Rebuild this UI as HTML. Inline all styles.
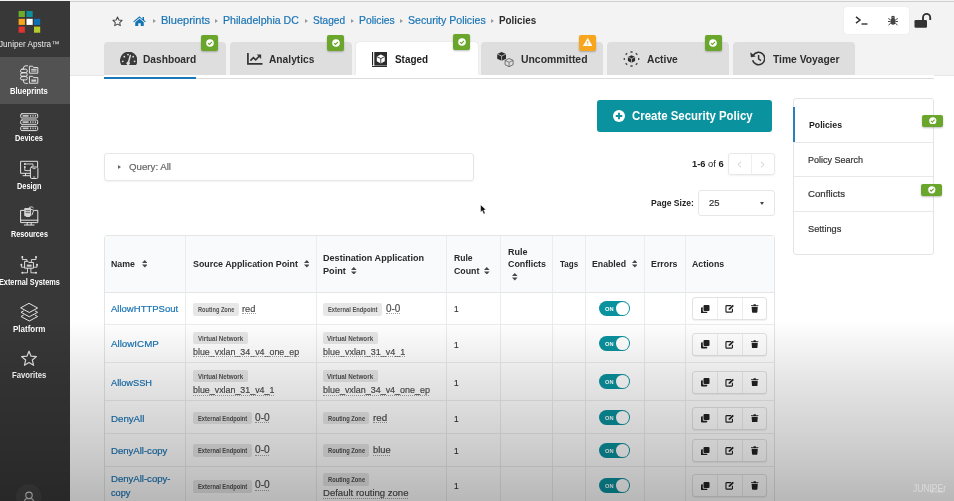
<!DOCTYPE html>
<html lang="en">
<head>
<meta charset="utf-8">
<title>Juniper Apstra - Security Policies</title>
<style>
*{box-sizing:border-box;margin:0;padding:0}
html,body{width:954px;height:501px;overflow:hidden;background:#fff}
body{position:relative;font-family:"Liberation Sans",sans-serif;color:#222;font-size:10px}
.abs{position:absolute}
.t{position:absolute;white-space:nowrap;line-height:1;display:inline-block;transform-origin:0 50%}
.b{font-weight:bold}
/* header */
#hdr{position:absolute;left:70px;top:0;width:884px;height:75px;background:#f3f3f3}
#topline{position:absolute;left:0;top:0;width:954px;height:2px;background:#d4d4d4;z-index:5}
.tab{position:absolute;top:42px;height:33px;width:122px;background:#dedede;border-radius:4px 4px 0 0}
.tab.on{background:#fff}
.tab .lbl{position:absolute;top:11px;font-size:11px;font-weight:bold;color:#2b2b2b;white-space:nowrap;line-height:1}
.badge{position:absolute;top:35px;width:17px;height:16px;border-radius:2px;background:#6aa62c;box-shadow:0 1px 2px rgba(0,0,0,.25)}
.badge.warn{background:#f9a61f}
.bc{position:absolute;top:14px;font-size:11px;color:#1273b4;white-space:nowrap;line-height:1}
.bcsep{position:absolute;top:18.500px;width:0;height:0;border-left:3.500px solid #9a9a9a;border-top:2.500px solid transparent;border-bottom:2.500px solid transparent}
/* sidebar */
#side{position:absolute;left:0;top:0;width:70px;height:501px;background:#383838;overflow:hidden}
#side .act{position:absolute;left:0;top:57px;width:70px;height:47.4px;background:#525252}
#side .lb{position:absolute;left:-11px;width:81px;text-align:center;font-size:8.5px;font-weight:bold;color:#fff;white-space:nowrap;line-height:1}
#side svg{position:absolute}
/* table */
#tbl{position:absolute;left:104px;top:235px;width:671px;height:280px;border:1px solid #e3e5e7;border-radius:3px 3px 0 0;background:#fff}
#thead{position:absolute;left:0;top:0;width:669px;height:57px;background:#f9fafb;border-bottom:1px solid #e3e5e7}
.vl{position:absolute;top:0;width:1px;height:280px;background:#eaeced}
.hl{position:absolute;left:0;width:669px;height:1px;background:#eaeced}
.th{position:absolute;font-size:10px;font-weight:bold;color:#2a2a2a;white-space:nowrap;line-height:13px}
.nm{position:absolute;font-size:10.5px;color:#1273b4;white-space:nowrap;line-height:13px}
.tag{position:absolute;height:12px;border-radius:2px;background:#e6e6e6;font-size:6.5px;font-weight:bold;color:#555;line-height:12px;text-align:center;white-space:nowrap}
.val{position:absolute;font-size:10.5px;color:#555;white-space:nowrap;line-height:1;border-bottom:1px dotted #aaa;padding-bottom:1px}
.cnt{position:absolute;font-size:10.5px;color:#333;line-height:1}
.tog{position:absolute;width:30.700px;height:15px;border-radius:7.500px;background:#0a929e}
.tog i{position:absolute;right:1.100px;top:1.200px;width:12.600px;height:12.600px;border-radius:50%;background:#fff}
.tog span{position:absolute;left:5px;top:4px;font-size:5.5px;font-weight:bold;color:#fff;line-height:1;font-style:normal}
.acts{position:absolute;width:75px;height:23px;border:1px solid #e2e2e2;border-radius:3px;background:#fff;box-shadow:0 1px 1px rgba(0,0,0,.06)}
.acts b{position:absolute;top:0;width:1px;height:21px;background:#ececec}
.acts svg{position:absolute;top:6px}
/* right panel */
#rp{position:absolute;left:793px;top:98px;width:141px;height:157px;border:1px solid #e4e4e4;border-radius:3px;background:#fff}
#rp .d{position:absolute;left:0;width:139px;height:1px;background:#e8e8e8}
#rp .it{position:absolute;left:14px;font-size:10.5px;color:#333;line-height:1;white-space:nowrap}
.gb{position:absolute;width:21px;height:12px;border-radius:2px;background:#6aa62c;box-shadow:0 1px 2px rgba(0,0,0,.25)}
#fade{position:absolute;left:0;top:321px;width:954px;height:180px;background:linear-gradient(to bottom,rgba(0,0,0,0) 0,rgba(0,0,0,.012) 6px,rgba(0,0,0,.045) 24px,rgba(0,0,0,.1) 59px,rgba(0,0,0,.2) 130px,rgba(0,0,0,.28) 180px);z-index:50;pointer-events:none}

.ck{position:absolute;left:5px;top:4px;width:7px;height:7px;border-radius:50%;background:#fff}
.ck:after{content:"";position:absolute;left:1.5px;top:1.8px;width:3.4px;height:1.8px;border-left:1.1px solid #6aa62c;border-bottom:1.1px solid #6aa62c;transform:rotate(-47deg)}

.tagbg{position:absolute;border-radius:2px;background:#e7e7e7}
.dot{position:absolute;height:0;border-bottom:1px dotted #a4a4a4}
.ck2{position:absolute;left:7.500px;top:2.500px;width:7px;height:7px;border-radius:50%;background:#fff}
.ck2:after{content:"";position:absolute;left:1.500px;top:1.800px;width:3.400px;height:1.800px;border-left:1.100px solid #6aa62c;border-bottom:1.100px solid #6aa62c;transform:rotate(-47deg)}

#wrap{position:absolute;left:0;top:0;width:954px;height:501px;overflow:hidden;will-change:transform}

</style>
</head>
<body>
<div id="wrap">
<div id="hdr"></div>

<!-- breadcrumb -->
<svg class="abs" style="left:111.5px;top:16px" width="11" height="10.5" viewBox="0 0 24 23"><path d="M12 2.200l3 6.400 6.900.9-5.100 4.800 1.300 6.900-6.100-3.400-6.100 3.400 1.300-6.900L2.100 9.500l6.900-.9z" fill="none" stroke="#444" stroke-width="2.200" stroke-linejoin="round"/></svg>
<svg class="abs" style="left:132.5px;top:15.5px" width="13" height="10" viewBox="0 0 26 20"><path d="M13 0.500L0.500 10.800l1.500 1.800L13 3.600l11 9 1.500-1.800-3.500-2.900V2h-3v4.400z" fill="#1273b4"/><path d="M13 5.600l-8.500 7V20h6v-5.500h5V20h6v-7.400z" fill="#1273b4"/></svg>
<i class="bcsep" style="left:152.5px"></i>
<span class="t" id="t0" style="left:161.00px;top:16.29px;font-size:10.3px;transform:scaleX(1.0699);color:#1b75b5;-webkit-text-stroke:.2px #1b75b5">Blueprints</span>
<i class="bcsep" style="left:215px"></i>
<span class="t" id="t1" style="left:223.30px;top:16.29px;font-size:10.3px;transform:scaleX(1.0278);color:#1b75b5;-webkit-text-stroke:.2px #1b75b5">Philadelphia DC</span>
<i class="bcsep" style="left:304.5px"></i>
<span class="t" id="t2" style="left:313.00px;top:16.29px;font-size:10.3px;transform:scaleX(0.9804);color:#1b75b5;-webkit-text-stroke:.2px #1b75b5">Staged</span>
<i class="bcsep" style="left:350.5px"></i>
<span class="t" id="t3" style="left:359.00px;top:16.29px;font-size:10.3px;transform:scaleX(1.0061);color:#1b75b5;-webkit-text-stroke:.2px #1b75b5">Policies</span>
<i class="bcsep" style="left:400px"></i>
<span class="t" id="t4" style="left:408.00px;top:16.29px;font-size:10.3px;transform:scaleX(1.0285);color:#1b75b5;-webkit-text-stroke:.2px #1b75b5">Security Policies</span>
<i class="bcsep" style="left:491px"></i>
<span class="t" id="t5" style="left:499.00px;top:16.29px;font-size:10.3px;transform:scaleX(0.9583);color:#2b2b2b;font-weight:bold">Policies</span>

<div class="abs" style="left:70px;top:75px;width:34px;height:1px;background:#e6e6e6"></div><div class="abs" style="left:934px;top:75px;width:20px;height:1px;background:#e6e6e6"></div>
<!-- tool box -->
<div class="abs" style="left:844px;top:7px;width:65px;height:27px;background:#fff;border-radius:3px;box-shadow:0 0 1px rgba(0,0,0,.12)"></div>
<svg class="abs" style="left:854.5px;top:15.5px" width="13" height="9" viewBox="0 0 13 9"><path d="M1 0.800L5 4 1 7.200" fill="none" stroke="#333" stroke-width="1.500"/><path d="M6.500 8h6" stroke="#333" stroke-width="1.400"/></svg>
<svg class="abs" style="left:888px;top:15px" width="10" height="10.5" viewBox="0 0 20 21"><ellipse cx="10" cy="12.500" rx="5" ry="7" fill="#444"/><path d="M6 5.500a4 4 0 0 1 8 0z" fill="#444"/><path d="M0.500 7l4.500 2.500M19.500 7L15 9.500M0 13h5M20 13h-5M1 20l4.500-3.500M19 20l-4.500-3.500" stroke="#444" stroke-width="2" fill="none"/></svg>
<svg class="abs" style="left:914px;top:12.5px" width="18" height="15" viewBox="0 0 18 15"><rect x="0.500" y="7" width="12.500" height="7.800" rx="1.200" fill="#333"/><path d="M9 7V4.500a3.600 3.600 0 0 1 7.200 0V7" fill="none" stroke="#333" stroke-width="1.900"/></svg>

<!-- tabs -->
<div class="tab" style="left:104px"></div>
<div class="tab" style="left:230px"></div>
<div class="tab on" style="left:356px;box-shadow:0 0 2px rgba(0,0,0,.12)"></div>
<div class="tab" style="left:481px"></div>
<div class="tab" style="left:607px"></div>
<div class="tab" style="left:733px"></div>
<span class="t" id="t6" style="left:143.30px;top:53.86px;font-size:10.5px;transform:scaleX(0.9700);color:#2e2e2e;font-weight:bold">Dashboard</span>
<span class="t" id="t7" style="left:269.00px;top:53.86px;font-size:10.5px;transform:scaleX(0.9724);color:#2e2e2e;font-weight:bold">Analytics</span>
<span class="t" id="t8" style="left:395.00px;top:53.86px;font-size:10.5px;transform:scaleX(0.9424);color:#1c1c1c;font-weight:bold">Staged</span>
<span class="t" id="t9" style="left:520.90px;top:53.86px;font-size:10.5px;transform:scaleX(0.9912);color:#2e2e2e;font-weight:bold">Uncommitted</span>
<span class="t" id="t10" style="left:646.70px;top:53.86px;font-size:10.5px;transform:scaleX(0.9773);color:#2e2e2e;font-weight:bold">Active</span>
<span class="t" id="t11" style="left:772.50px;top:53.86px;font-size:10.5px;transform:scaleX(0.9808);color:#2e2e2e;font-weight:bold">Time Voyager</span>
<div class="abs" style="left:104px;top:75px;width:830px;height:3px;background:#fff"></div>
<div class="abs" style="left:104px;top:77.5px;width:830px;height:1px;background:#dcdcdc"></div>
<div class="abs" style="left:104px;top:77px;width:92px;height:2px;background:#1a78b8"></div>
<svg class="abs" style="left:120px;top:52px" width="17.400" height="13.200" viewBox="0 0 17.400 13.200"><path d="M1.500 13.200A8.700 8.700 0 1 1 15.900 13.200Q15.600 13.200 15.300 13.200H2.100Z" fill="#3a3a3a"/><path d="M1.200 13.200h15" stroke="#3a3a3a" stroke-width="0"/><path d="M8 12.300L10.300 3.600" stroke="#dedede" stroke-width="1.500" stroke-linecap="round"/><circle cx="8.200" cy="11.300" r="1.700" fill="#dedede"/><g fill="#dedede"><circle cx="2.800" cy="9.300" r=".9"/><circle cx="4.300" cy="4.700" r=".9"/><circle cx="8" cy="2.600" r=".9"/><circle cx="13.200" cy="4.700" r=".9"/><circle cx="14.600" cy="9.300" r=".9"/></g></svg>
<svg class="abs" style="left:247px;top:53px" width="15.500" height="11.800" viewBox="0 0 15.500 11.800"><path d="M.9 0v10.900h14.600" fill="none" stroke="#333" stroke-width="1.700"/><path d="M3.400 7.600l3-3 2.300 2.200 4-4" fill="none" stroke="#333" stroke-width="1.600"/><path d="M9.800 1.600h4.300v4.300z" fill="#333"/></svg>
<svg class="abs" style="left:372px;top:51.500px" width="15.200" height="15.200" viewBox="0 0 15.200 15.200"><rect x="0" y="0" width="1.100" height="13.400" fill="#222"/><rect x="2.300" y="0" width="12.900" height="13.600" fill="#2b2b2b"/><rect x="0" y="14" width="15.200" height="1.200" fill="#2b2b2b"/><path d="M8.800 2.600l4 2v4.700l-4 2.200-4-2.200V4.600z" fill="#fff"/><path d="M4.800 4.600l4 2 4-2M8.800 6.600v4.900" fill="none" stroke="#2b2b2b" stroke-width=".9"/></svg>
<svg class="abs" style="left:497px;top:51.500px" width="16.500" height="15" viewBox="0 0 16.500 15"><path d="M4.600 0l4.400 2v4.700l-4.400 2.100-4.400-2.100V2z" fill="#2b2b2b"/><path d="M.2 2l4.400 2 4.400-2M4.600 4v4.800" fill="none" stroke="#dedede" stroke-width=".7"/><path d="M12.100 6.500l4 1.900v4.300l-4 2-4-2V8.400z" fill="#dedede" stroke="#555" stroke-width=".8" stroke-linejoin="round"/><path d="M8.100 8.400l4 1.900 4-1.900M12.100 10.300v4.400" fill="none" stroke="#555" stroke-width=".7"/></svg>
<svg class="abs" style="left:622.500px;top:51px" width="17" height="16" viewBox="0 0 17 16"><path d="M15.70 6.90L15.70 9.10M14.37 12.17L12.81 13.73M9.60 15.00L7.40 15.00M4.19 13.73L2.63 12.17M1.30 9.10L1.30 6.90M2.63 3.83L4.19 2.27M7.40 1.00L9.60 1.00M12.81 2.27L14.37 3.83" stroke="#444" stroke-width="1.300" fill="none"/><path d="M8.500 4.300l3.600 1.700v4l-3.600 1.800-3.600-1.800V6z" fill="#2b2b2b"/><path d="M4.900 6l3.600 1.700 3.600-1.700M8.500 7.700v4" fill="none" stroke="#dedede" stroke-width=".7"/></svg>
<svg class="abs" style="left:750.200px;top:51.400px" width="15.200" height="14.600" viewBox="0 0 15.200 14.600"><path d="M3.300 4.200A6.200 6.200 0 1 1 2.600 9.300" fill="none" stroke="#333" stroke-width="1.600"/><path d="M.3 1.300l.6 5 4.800-.9z" fill="#333"/><path d="M8.600 4v3.800l2.400 1.800" fill="none" stroke="#333" stroke-width="1.500"/></svg>
<!-- tab badges -->
<div class="badge" style="left:201px"><svg class="abs" style="left:4.500px;top:4px" width="8" height="8" viewBox="0 0 16 16"><circle cx="8" cy="8" r="7.600" fill="#fff"/><path d="M4.200 8.300l2.700 2.700 5-5.300" fill="none" stroke="#6aa62c" stroke-width="2.300"/></svg></div>
<div class="badge" style="left:327px"><svg class="abs" style="left:4.500px;top:4px" width="8" height="8" viewBox="0 0 16 16"><circle cx="8" cy="8" r="7.600" fill="#fff"/><path d="M4.200 8.300l2.700 2.700 5-5.300" fill="none" stroke="#6aa62c" stroke-width="2.300"/></svg></div>
<div class="badge" style="left:453px;top:34px"><svg class="abs" style="left:4.500px;top:4px" width="8" height="8" viewBox="0 0 16 16"><circle cx="8" cy="8" r="7.600" fill="#fff"/><path d="M4.200 8.300l2.700 2.700 5-5.300" fill="none" stroke="#6aa62c" stroke-width="2.300"/></svg></div>
<div class="badge warn" style="left:578.5px"></div>
<svg class="abs" style="left:582.500px;top:37.500px" width="9.500" height="8.500" viewBox="0 0 19 17"><path d="M9.500 1L18.300 16H.7z" fill="#fff" stroke="#fff" stroke-width="1.400" stroke-linejoin="round"/><path d="M9.500 6v5.500" stroke="#f9a61f" stroke-width="2"/><circle cx="9.500" cy="13.600" r="1.100" fill="#f9a61f"/></svg>
<div class="badge" style="left:704.5px"><svg class="abs" style="left:4.500px;top:4px" width="8" height="8" viewBox="0 0 16 16"><circle cx="8" cy="8" r="7.600" fill="#fff"/><path d="M4.200 8.300l2.700 2.700 5-5.300" fill="none" stroke="#6aa62c" stroke-width="2.300"/></svg></div>

<div class="abs" style="left:596.5px;top:100px;width:175px;height:31.5px;background:#0a929e;border-radius:3px"></div>
<svg class="abs" style="left:613.300px;top:110px" width="12" height="12" viewBox="0 0 12 12"><circle cx="6" cy="6" r="6" fill="#fff"/><path d="M6 2.800v6.400M2.800 6h6.400" stroke="#0a929e" stroke-width="1.900"/></svg>
<span class="t" id="t12" style="left:631.80px;top:110.40px;font-size:12.0px;transform:scaleX(0.9516);color:#fff;font-weight:bold">Create Security Policy</span>
<div class="abs" style="left:104px;top:152.500px;width:369.500px;height:28px;border:1px solid #e6e6e6;border-radius:3px;background:#fff;box-shadow:0 1px 2px rgba(0,0,0,.05)"></div>
<i class="abs" style="left:117.500px;top:164.500px;width:0;height:0;border-left:3.500px solid #666;border-top:2.500px solid transparent;border-bottom:2.500px solid transparent"></i>
<span class="t" id="t13" style="left:129.00px;top:162.37px;font-size:9.4px;transform:scaleX(1.0334);color:#666;-webkit-text-stroke:.2px #666">Query: All</span>
<span class="t" id="t14" style="left:691.70px;top:158.77px;font-size:9.4px;transform:scaleX(0.9965);color:#222"><b>1-6</b> of <b>6</b></span>
<div class="abs" style="left:728px;top:152.500px;width:46.500px;height:22.500px;border:1px solid #e8e8e8;border-radius:3px;background:#fff;box-shadow:0 1px 2px rgba(0,0,0,.06)"></div>
<div class="abs" style="left:751px;top:153.500px;width:1px;height:20.500px;background:#f0f0f0"></div>
<svg class="abs" style="left:737px;top:160.500px" width="5" height="7" viewBox="0 0 5 7"><path d="M4 .7L1 3.500 4 6.300" fill="none" stroke="#ccc" stroke-width="1"/></svg>
<svg class="abs" style="left:760px;top:160.500px" width="5" height="7" viewBox="0 0 5 7"><path d="M1 .7L4 3.500 1 6.300" fill="none" stroke="#ccc" stroke-width="1"/></svg>
<span class="t" id="t15" style="left:651.00px;top:197.97px;font-size:9.4px;transform:scaleX(0.9125);color:#222;font-weight:bold">Page Size:</span>
<div class="abs" style="left:698px;top:190px;width:76.500px;height:25.500px;border:1px solid #e6e6e6;border-radius:3px;background:#fff"></div>
<span class="t" id="t16" style="left:708.70px;top:197.97px;font-size:9.4px;transform:scaleX(1.0060);color:#333;-webkit-text-stroke:.2px #333">25</span>
<i class="abs" style="left:759.500px;top:201.500px;width:0;height:0;border-top:3px solid #444;border-left:2.500px solid transparent;border-right:2.500px solid transparent"></i>
<div id="rp"><div class="d" style="top:42.500px"></div><div class="d" style="top:77px"></div><div class="d" style="top:111.500px"></div><div class="abs" style="left:-1px;top:8px;width:2px;height:35px;background:#2a80bd"></div></div>
<span class="t" id="t17" style="left:809.00px;top:119.87px;font-size:9.4px;transform:scaleX(0.9312);color:#1c1c1c;font-weight:bold">Policies</span>
<span class="t" id="t18" style="left:808.00px;top:154.67px;font-size:9.4px;transform:scaleX(0.9594);color:#333;-webkit-text-stroke:.2px #333">Policy Search</span>
<span class="t" id="t19" style="left:808.00px;top:189.27px;font-size:9.4px;transform:scaleX(1.0291);color:#333;-webkit-text-stroke:.2px #333">Conflicts</span>
<span class="t" id="t20" style="left:808.00px;top:224.17px;font-size:9.4px;transform:scaleX(0.9830);color:#333;-webkit-text-stroke:.2px #333">Settings</span>
<div class="gb" style="left:922px;top:114.500px"><svg class="abs" style="left:7px;top:2.200px" width="7.600" height="7.600" viewBox="0 0 16 16"><circle cx="8" cy="8" r="7.600" fill="#fff"/><path d="M4.200 8.300l2.700 2.700 5-5.300" fill="none" stroke="#6aa62c" stroke-width="2.300"/></svg></div>
<div class="gb" style="left:921px;top:184px"><svg class="abs" style="left:7px;top:2.200px" width="7.600" height="7.600" viewBox="0 0 16 16"><circle cx="8" cy="8" r="7.600" fill="#fff"/><path d="M4.200 8.300l2.700 2.700 5-5.300" fill="none" stroke="#6aa62c" stroke-width="2.300"/></svg></div>
<div id="tbl"><div id="thead"></div>
<div class="vl" style="left:80px"></div>
<div class="vl" style="left:211px"></div>
<div class="vl" style="left:341px"></div>
<div class="vl" style="left:395px"></div>
<div class="vl" style="left:447px"></div>
<div class="vl" style="left:480px"></div>
<div class="vl" style="left:539px"></div>
<div class="vl" style="left:580px"></div>
<div class="hl" style="top:88px"></div>
<div class="hl" style="top:126px"></div>
<div class="hl" style="top:164px"></div>
<div class="hl" style="top:197px"></div>
<div class="hl" style="top:230px"></div>
</div>
<span class="t" id="t21" style="left:111.40px;top:260.29px;font-size:9.2px;transform:scaleX(0.9548);color:#2a2a2a;font-weight:bold">Name</span>
<svg class="abs" style="left:141.7px;top:260.2px" width="5.600" height="7.600" viewBox="0 0 5.600 7.600"><path d="M2.800 0L5.600 3.100H0zM2.800 7.600L5.600 4.500H0z" fill="#484848"/></svg>
<span class="t" id="t22" style="left:192.60px;top:260.29px;font-size:9.2px;transform:scaleX(0.9632);color:#2a2a2a;font-weight:bold">Source Application Point</span>
<svg class="abs" style="left:303.8px;top:260.2px" width="5.600" height="7.600" viewBox="0 0 5.600 7.600"><path d="M2.800 0L5.600 3.100H0zM2.800 7.600L5.600 4.500H0z" fill="#484848"/></svg>
<span class="t" id="t23" style="left:323.00px;top:253.99px;font-size:9.2px;transform:scaleX(0.9876);color:#2a2a2a;font-weight:bold">Destination Application</span>
<span class="t" id="t24" style="left:323.00px;top:267.09px;font-size:9.2px;transform:scaleX(0.9927);color:#2a2a2a;font-weight:bold">Point</span>
<svg class="abs" style="left:351.0px;top:266.7px" width="5.600" height="7.600" viewBox="0 0 5.600 7.600"><path d="M2.800 0L5.600 3.100H0zM2.800 7.600L5.600 4.500H0z" fill="#484848"/></svg>
<span class="t" id="t25" style="left:453.70px;top:253.99px;font-size:9.2px;transform:scaleX(0.9336);color:#2a2a2a;font-weight:bold">Rule</span>
<span class="t" id="t26" style="left:453.70px;top:267.09px;font-size:9.2px;transform:scaleX(0.9574);color:#2a2a2a;font-weight:bold">Count</span>
<svg class="abs" style="left:484.3px;top:266.7px" width="5.600" height="7.600" viewBox="0 0 5.600 7.600"><path d="M2.800 0L5.600 3.100H0zM2.800 7.600L5.600 4.500H0z" fill="#484848"/></svg>
<span class="t" id="t27" style="left:507.50px;top:247.69px;font-size:9.2px;transform:scaleX(0.9788);color:#2a2a2a;font-weight:bold">Rule</span>
<span class="t" id="t28" style="left:507.50px;top:260.29px;font-size:9.2px;transform:scaleX(0.9666);color:#2a2a2a;font-weight:bold">Conflicts</span>
<svg class="abs" style="left:512.3px;top:273.2px" width="5.600" height="7.600" viewBox="0 0 5.600 7.600"><path d="M2.800 0L5.600 3.100H0zM2.800 7.600L5.600 4.500H0z" fill="#484848"/></svg>
<span class="t" id="t29" style="left:560.00px;top:260.29px;font-size:9.2px;transform:scaleX(0.8764);color:#2a2a2a;font-weight:bold">Tags</span>
<span class="t" id="t30" style="left:592.30px;top:260.29px;font-size:9.2px;transform:scaleX(0.9510);color:#2a2a2a;font-weight:bold">Enabled</span>
<svg class="abs" style="left:631.6px;top:260.2px" width="5.600" height="7.600" viewBox="0 0 5.600 7.600"><path d="M2.800 0L5.600 3.100H0zM2.800 7.600L5.600 4.500H0z" fill="#484848"/></svg>
<span class="t" id="t31" style="left:651.40px;top:260.29px;font-size:9.2px;transform:scaleX(0.9609);color:#2a2a2a;font-weight:bold">Errors</span>
<span class="t" id="t32" style="left:692.20px;top:260.29px;font-size:9.2px;transform:scaleX(0.9554);color:#2a2a2a;font-weight:bold">Actions</span>
<span class="t" id="t33" style="left:111.30px;top:304.27px;font-size:9.4px;transform:scaleX(1.0155);color:#1b75b5;-webkit-text-stroke:.2px #1b75b5">AllowHTTPSout</span>
<span class="t" id="t34" style="left:111.30px;top:339.47px;font-size:9.4px;transform:scaleX(1.0427);color:#1b75b5;-webkit-text-stroke:.2px #1b75b5">AllowICMP</span>
<span class="t" id="t35" style="left:111.30px;top:377.97px;font-size:9.4px;transform:scaleX(0.9835);color:#1b75b5;-webkit-text-stroke:.2px #1b75b5">AllowSSH</span>
<span class="t" id="t36" style="left:110.90px;top:413.67px;font-size:9.4px;transform:scaleX(1.0337);color:#1b75b5;-webkit-text-stroke:.2px #1b75b5">DenyAll</span>
<span class="t" id="t37" style="left:110.90px;top:446.17px;font-size:9.4px;transform:scaleX(1.0193);color:#1b75b5;-webkit-text-stroke:.2px #1b75b5">DenyAll-copy</span>
<span class="t" id="t38" style="left:110.90px;top:474.17px;font-size:9.4px;transform:scaleX(1.0195);color:#1b75b5;-webkit-text-stroke:.2px #1b75b5">DenyAll-copy-</span>
<span class="t" id="t39" style="left:110.80px;top:487.87px;font-size:9.4px;transform:scaleX(0.9792);color:#1b75b5;-webkit-text-stroke:.2px #1b75b5">copy</span>
<!--ROWS-BEGIN-->
<div class="tagbg" style="left:193.3px;top:303.10px;width:45.7px;height:12.5px"></div><span class="t" id="t40" style="left:197.90px;top:307.14px;font-size:6.4px;transform:scaleX(0.8838);color:#505050;font-weight:bold">Routing Zone</span>
<span class="t" id="t41" style="left:242.40px;top:303.60px;font-size:9.8px;transform:scaleX(0.9455);color:#4c4c4c;-webkit-text-stroke:.2px #4c4c4c">red</span><div class="dot" style="left:242.4px;top:313.20px;width:13.4px"></div>
<div class="tagbg" style="left:193px;top:331.75px;width:54.5px;height:12.5px"></div><span class="t" id="t42" style="left:197.60px;top:335.79px;font-size:6.4px;transform:scaleX(0.9665);color:#505050;font-weight:bold">Virtual Network</span>
<span class="t" id="t43" style="left:192.90px;top:346.60px;font-size:9.8px;transform:scaleX(0.9059);color:#4c4c4c;-webkit-text-stroke:.2px #4c4c4c">blue_vxlan_34_v4_one_ep</span><div class="dot" style="left:192.9px;top:356.20px;width:106.1px"></div>
<div class="tagbg" style="left:193px;top:369.85px;width:54.5px;height:12.5px"></div><span class="t" id="t44" style="left:197.60px;top:373.89px;font-size:6.4px;transform:scaleX(0.9665);color:#505050;font-weight:bold">Virtual Network</span>
<span class="t" id="t45" style="left:192.90px;top:385.00px;font-size:9.8px;transform:scaleX(0.9055);color:#4c4c4c;-webkit-text-stroke:.2px #4c4c4c">blue_vxlan_31_v4_1</span><div class="dot" style="left:192.9px;top:394.60px;width:81.4px"></div>
<div class="tagbg" style="left:193.2px;top:411.95px;width:58.6px;height:12.5px"></div><span class="t" id="t46" style="left:197.80px;top:415.99px;font-size:6.4px;transform:scaleX(0.9015);color:#505050;font-weight:bold">External Endpoint</span>
<span class="t" id="t47" style="left:254.80px;top:411.50px;font-size:10.6px;transform:scaleX(0.9600);color:#4c4c4c;-webkit-text-stroke:.2px #4c4c4c">0-0</span><div class="dot" style="left:254.8px;top:422.10px;width:14.7px"></div>
<div class="tagbg" style="left:193.2px;top:444.35px;width:58.6px;height:12.5px"></div><span class="t" id="t48" style="left:197.80px;top:448.39px;font-size:6.4px;transform:scaleX(0.9015);color:#505050;font-weight:bold">External Endpoint</span>
<span class="t" id="t49" style="left:254.80px;top:443.90px;font-size:10.6px;transform:scaleX(0.9600);color:#4c4c4c;-webkit-text-stroke:.2px #4c4c4c">0-0</span><div class="dot" style="left:254.8px;top:454.50px;width:14.7px"></div>
<div class="tagbg" style="left:193.2px;top:480.15px;width:58.6px;height:12.5px"></div><span class="t" id="t50" style="left:197.80px;top:484.19px;font-size:6.4px;transform:scaleX(0.9015);color:#505050;font-weight:bold">External Endpoint</span>
<span class="t" id="t51" style="left:254.80px;top:479.40px;font-size:10.6px;transform:scaleX(0.9600);color:#4c4c4c;-webkit-text-stroke:.2px #4c4c4c">0-0</span><div class="dot" style="left:254.8px;top:490.00px;width:14.7px"></div>
<div class="tagbg" style="left:323px;top:303.10px;width:58.8px;height:12.5px"></div><span class="t" id="t52" style="left:327.60px;top:307.14px;font-size:6.4px;transform:scaleX(0.9051);color:#505050;font-weight:bold">External Endpoint</span>
<span class="t" id="t53" style="left:385.50px;top:302.60px;font-size:10.6px;transform:scaleX(0.9339);color:#4c4c4c;-webkit-text-stroke:.2px #4c4c4c">0-0</span><div class="dot" style="left:385.5px;top:313.20px;width:14.3px"></div>
<div class="tagbg" style="left:322.6px;top:331.75px;width:55.5px;height:12.5px"></div><span class="t" id="t54" style="left:327.20px;top:335.79px;font-size:6.4px;transform:scaleX(0.9879);color:#505050;font-weight:bold">Virtual Network</span>
<span class="t" id="t55" style="left:322.60px;top:346.60px;font-size:9.8px;transform:scaleX(0.9144);color:#4c4c4c;-webkit-text-stroke:.2px #4c4c4c">blue_vxlan_31_v4_1</span><div class="dot" style="left:322.6px;top:356.20px;width:82.2px"></div>
<div class="tagbg" style="left:322.6px;top:369.85px;width:55.5px;height:12.5px"></div><span class="t" id="t56" style="left:327.20px;top:373.89px;font-size:6.4px;transform:scaleX(0.9879);color:#505050;font-weight:bold">Virtual Network</span>
<span class="t" id="t57" style="left:322.60px;top:385.00px;font-size:9.8px;transform:scaleX(0.9127);color:#4c4c4c;-webkit-text-stroke:.2px #4c4c4c">blue_vxlan_34_v4_one_ep</span><div class="dot" style="left:322.6px;top:394.60px;width:106.9px"></div>
<div class="tagbg" style="left:322.9px;top:411.95px;width:46.4px;height:12.5px"></div><span class="t" id="t58" style="left:327.50px;top:415.99px;font-size:6.4px;transform:scaleX(0.9008);color:#505050;font-weight:bold">Routing Zone</span>
<span class="t" id="t59" style="left:372.80px;top:412.50px;font-size:9.8px;transform:scaleX(0.9949);color:#4c4c4c;-webkit-text-stroke:.2px #4c4c4c">red</span><div class="dot" style="left:372.8px;top:422.10px;width:14.1px"></div>
<div class="tagbg" style="left:322.9px;top:444.35px;width:46.4px;height:12.5px"></div><span class="t" id="t60" style="left:327.50px;top:448.39px;font-size:6.4px;transform:scaleX(0.9008);color:#505050;font-weight:bold">Routing Zone</span>
<span class="t" id="t61" style="left:372.80px;top:444.90px;font-size:9.8px;transform:scaleX(0.9497);color:#4c4c4c;-webkit-text-stroke:.2px #4c4c4c">blue</span><div class="dot" style="left:372.8px;top:454.50px;width:17.6px"></div>
<div class="tagbg" style="left:322.9px;top:473.15px;width:46.4px;height:12.5px"></div><span class="t" id="t62" style="left:327.50px;top:477.19px;font-size:6.4px;transform:scaleX(0.9008);color:#505050;font-weight:bold">Routing Zone</span>
<span class="t" id="t63" style="left:322.90px;top:487.90px;font-size:9.8px;transform:scaleX(0.9751);color:#4c4c4c;-webkit-text-stroke:.2px #4c4c4c">Default routing zone</span><div class="dot" style="left:322.9px;top:497.50px;width:85.5px"></div>
<!--ROWS-END-->
<span class="t" id="t64" style="left:454.00px;top:304.27px;font-size:9.4px;transform:scaleX(0.8814);color:#333;-webkit-text-stroke:.2px #333">1</span>
<div class="tog" style="left:599.3px;top:301.0px"><i></i></div>
<span class="t" id="t65" style="left:605.00px;top:306.80px;font-size:5.6px;transform:scaleX(1.0130);color:#fff;font-weight:bold">ON</span>
<div class="acts" style="left:692px;top:297.4px"><b style="left:24px"></b><b style="left:49px"></b></div>
<svg class="abs" style="left:701px;top:304.9px" width="8.500" height="8.500" viewBox="0 0 17 17"><rect x="5" y="0" width="12" height="12" rx="2" fill="#222"/><path d="M3.500 4.500H2a2 2 0 0 0-2 2V15a2 2 0 0 0 2 2h8.500a2 2 0 0 0 2-2v-1.500H5.500a2 2 0 0 1-2-2z" fill="#222"/></svg>
<svg class="abs" style="left:725px;top:304.4px" width="9.600" height="9.100" viewBox="0 0 20 19"><path d="M13 3.500H3.500A1.500 1.500 0 0 0 2 5v10.500A1.500 1.500 0 0 0 3.500 17H14a1.500 1.500 0 0 0 1.500-1.500V10" fill="none" stroke="#222" stroke-width="2.400"/><path d="M8 9.500L16 1.500l2.500 2.500-8 8-3.200.7z" fill="#222"/></svg>
<svg class="abs" style="left:751.3px;top:304.4px" width="7.400" height="8.800" viewBox="0 0 16 19"><path d="M0 2.500h5l1-2h4l1 2h5v2H0zM1.300 6h13.400l-.9 11.500a1.600 1.600 0 0 1-1.600 1.500H3.800a1.600 1.600 0 0 1-1.600-1.500z" fill="#222"/></svg>
<span class="t" id="t66" style="left:454.00px;top:339.57px;font-size:9.4px;transform:scaleX(0.8814);color:#333;-webkit-text-stroke:.2px #333">1</span>
<div class="tog" style="left:599.3px;top:336.3px"><i></i></div>
<span class="t" id="t67" style="left:605.00px;top:342.10px;font-size:5.6px;transform:scaleX(1.0130);color:#fff;font-weight:bold">ON</span>
<div class="acts" style="left:692px;top:332.7px"><b style="left:24px"></b><b style="left:49px"></b></div>
<svg class="abs" style="left:701px;top:340.2px" width="8.500" height="8.500" viewBox="0 0 17 17"><rect x="5" y="0" width="12" height="12" rx="2" fill="#222"/><path d="M3.500 4.500H2a2 2 0 0 0-2 2V15a2 2 0 0 0 2 2h8.500a2 2 0 0 0 2-2v-1.500H5.500a2 2 0 0 1-2-2z" fill="#222"/></svg>
<svg class="abs" style="left:725px;top:339.7px" width="9.600" height="9.100" viewBox="0 0 20 19"><path d="M13 3.500H3.500A1.500 1.500 0 0 0 2 5v10.500A1.500 1.500 0 0 0 3.500 17H14a1.500 1.500 0 0 0 1.500-1.500V10" fill="none" stroke="#222" stroke-width="2.400"/><path d="M8 9.500L16 1.500l2.500 2.500-8 8-3.200.7z" fill="#222"/></svg>
<svg class="abs" style="left:751.3px;top:339.7px" width="7.400" height="8.800" viewBox="0 0 16 19"><path d="M0 2.500h5l1-2h4l1 2h5v2H0zM1.300 6h13.400l-.9 11.500a1.600 1.600 0 0 1-1.600 1.500H3.800a1.600 1.600 0 0 1-1.600-1.500z" fill="#222"/></svg>
<span class="t" id="t68" style="left:454.00px;top:377.57px;font-size:9.4px;transform:scaleX(0.8814);color:#333;-webkit-text-stroke:.2px #333">1</span>
<div class="tog" style="left:599.3px;top:374.3px"><i></i></div>
<span class="t" id="t69" style="left:605.00px;top:380.10px;font-size:5.6px;transform:scaleX(1.0130);color:#fff;font-weight:bold">ON</span>
<div class="acts" style="left:692px;top:370.7px"><b style="left:24px"></b><b style="left:49px"></b></div>
<svg class="abs" style="left:701px;top:378.2px" width="8.500" height="8.500" viewBox="0 0 17 17"><rect x="5" y="0" width="12" height="12" rx="2" fill="#222"/><path d="M3.500 4.500H2a2 2 0 0 0-2 2V15a2 2 0 0 0 2 2h8.500a2 2 0 0 0 2-2v-1.500H5.500a2 2 0 0 1-2-2z" fill="#222"/></svg>
<svg class="abs" style="left:725px;top:377.7px" width="9.600" height="9.100" viewBox="0 0 20 19"><path d="M13 3.500H3.500A1.500 1.500 0 0 0 2 5v10.500A1.500 1.500 0 0 0 3.500 17H14a1.500 1.500 0 0 0 1.500-1.500V10" fill="none" stroke="#222" stroke-width="2.400"/><path d="M8 9.500L16 1.500l2.500 2.500-8 8-3.200.7z" fill="#222"/></svg>
<svg class="abs" style="left:751.3px;top:377.7px" width="7.400" height="8.800" viewBox="0 0 16 19"><path d="M0 2.500h5l1-2h4l1 2h5v2H0zM1.300 6h13.400l-.9 11.500a1.600 1.600 0 0 1-1.600 1.500H3.800a1.600 1.600 0 0 1-1.600-1.500z" fill="#222"/></svg>
<span class="t" id="t70" style="left:454.00px;top:413.57px;font-size:9.4px;transform:scaleX(0.8814);color:#333;-webkit-text-stroke:.2px #333">1</span>
<div class="tog" style="left:599.3px;top:410.3px"><i></i></div>
<span class="t" id="t71" style="left:605.00px;top:416.10px;font-size:5.6px;transform:scaleX(1.0130);color:#fff;font-weight:bold">ON</span>
<div class="acts" style="left:692px;top:406.7px"><b style="left:24px"></b><b style="left:49px"></b></div>
<svg class="abs" style="left:701px;top:414.2px" width="8.500" height="8.500" viewBox="0 0 17 17"><rect x="5" y="0" width="12" height="12" rx="2" fill="#222"/><path d="M3.500 4.500H2a2 2 0 0 0-2 2V15a2 2 0 0 0 2 2h8.500a2 2 0 0 0 2-2v-1.500H5.500a2 2 0 0 1-2-2z" fill="#222"/></svg>
<svg class="abs" style="left:725px;top:413.7px" width="9.600" height="9.100" viewBox="0 0 20 19"><path d="M13 3.500H3.500A1.500 1.500 0 0 0 2 5v10.500A1.500 1.500 0 0 0 3.500 17H14a1.500 1.500 0 0 0 1.500-1.500V10" fill="none" stroke="#222" stroke-width="2.400"/><path d="M8 9.500L16 1.500l2.500 2.500-8 8-3.200.7z" fill="#222"/></svg>
<svg class="abs" style="left:751.3px;top:413.7px" width="7.400" height="8.800" viewBox="0 0 16 19"><path d="M0 2.500h5l1-2h4l1 2h5v2H0zM1.300 6h13.400l-.9 11.500a1.600 1.600 0 0 1-1.600 1.500H3.800a1.600 1.600 0 0 1-1.600-1.500z" fill="#222"/></svg>
<span class="t" id="t72" style="left:454.00px;top:446.17px;font-size:9.4px;transform:scaleX(0.8814);color:#333;-webkit-text-stroke:.2px #333">1</span>
<div class="tog" style="left:599.3px;top:442.9px"><i></i></div>
<span class="t" id="t73" style="left:605.00px;top:448.70px;font-size:5.6px;transform:scaleX(1.0130);color:#fff;font-weight:bold">ON</span>
<div class="acts" style="left:692px;top:439.3px"><b style="left:24px"></b><b style="left:49px"></b></div>
<svg class="abs" style="left:701px;top:446.8px" width="8.500" height="8.500" viewBox="0 0 17 17"><rect x="5" y="0" width="12" height="12" rx="2" fill="#222"/><path d="M3.500 4.500H2a2 2 0 0 0-2 2V15a2 2 0 0 0 2 2h8.500a2 2 0 0 0 2-2v-1.500H5.500a2 2 0 0 1-2-2z" fill="#222"/></svg>
<svg class="abs" style="left:725px;top:446.3px" width="9.600" height="9.100" viewBox="0 0 20 19"><path d="M13 3.500H3.500A1.500 1.500 0 0 0 2 5v10.500A1.500 1.500 0 0 0 3.500 17H14a1.500 1.500 0 0 0 1.500-1.500V10" fill="none" stroke="#222" stroke-width="2.400"/><path d="M8 9.500L16 1.500l2.500 2.500-8 8-3.200.7z" fill="#222"/></svg>
<svg class="abs" style="left:751.3px;top:446.3px" width="7.400" height="8.800" viewBox="0 0 16 19"><path d="M0 2.500h5l1-2h4l1 2h5v2H0zM1.300 6h13.400l-.9 11.500a1.600 1.600 0 0 1-1.600 1.500H3.800a1.600 1.600 0 0 1-1.600-1.500z" fill="#222"/></svg>
<span class="t" id="t74" style="left:454.00px;top:481.17px;font-size:9.4px;transform:scaleX(0.8814);color:#333;-webkit-text-stroke:.2px #333">1</span>
<div class="tog" style="left:599.3px;top:477.9px"><i></i></div>
<span class="t" id="t75" style="left:605.00px;top:483.70px;font-size:5.6px;transform:scaleX(1.0130);color:#fff;font-weight:bold">ON</span>
<div class="acts" style="left:692px;top:474.3px"><b style="left:24px"></b><b style="left:49px"></b></div>
<svg class="abs" style="left:701px;top:481.8px" width="8.500" height="8.500" viewBox="0 0 17 17"><rect x="5" y="0" width="12" height="12" rx="2" fill="#222"/><path d="M3.500 4.500H2a2 2 0 0 0-2 2V15a2 2 0 0 0 2 2h8.500a2 2 0 0 0 2-2v-1.500H5.500a2 2 0 0 1-2-2z" fill="#222"/></svg>
<svg class="abs" style="left:725px;top:481.3px" width="9.600" height="9.100" viewBox="0 0 20 19"><path d="M13 3.500H3.500A1.500 1.500 0 0 0 2 5v10.500A1.500 1.500 0 0 0 3.500 17H14a1.500 1.500 0 0 0 1.500-1.500V10" fill="none" stroke="#222" stroke-width="2.400"/><path d="M8 9.500L16 1.500l2.500 2.500-8 8-3.200.7z" fill="#222"/></svg>
<svg class="abs" style="left:751.3px;top:481.3px" width="7.400" height="8.800" viewBox="0 0 16 19"><path d="M0 2.500h5l1-2h4l1 2h5v2H0zM1.300 6h13.400l-.9 11.500a1.600 1.600 0 0 1-1.600 1.500H3.800a1.600 1.600 0 0 1-1.600-1.500z" fill="#222"/></svg>
<svg class="abs" style="left:479px;top:203px;z-index:60" width="10" height="13" viewBox="479 203 10 13"><path d="M480.700 204.900L480.700 211.900L482.300 210.500L483.800 213.900L485.100 213.300L483.600 210L485.800 209.800Z" fill="#0a0a0a" stroke="rgba(255,255,255,.6)" stroke-width=".5"/></svg>

<!-- sidebar -->
<div id="side"><div class="act"></div>
</div>
<svg class="abs" style="left:0;top:0;z-index:2" width="70" height="501" viewBox="0 0 70 501" fill="none" stroke="#e4e4e4" stroke-width="1" stroke-linejoin="round" stroke-linecap="round">
<g stroke="none">
<rect x="18.6" y="11" width="6.3" height="6" fill="#6cab2b"/><rect x="26.500" y="11" width="6.200" height="6" fill="#0e8d9b"/>
<rect x="18.6" y="18.800" width="6.300" height="6.100" fill="#f9a61c"/><rect x="26.500" y="18.800" width="6.200" height="6.100" fill="#ffffff"/><rect x="34" y="18.800" width="6.200" height="6.100" fill="#0d70b6"/>
<rect x="18.6" y="26.600" width="6.300" height="6.100" fill="#e03430"/><rect x="34" y="26.600" width="6.200" height="6.100" fill="#b6ca2c"/>
</g>
<!-- blueprints -->
<rect x="20.5" y="69.200" width="6.800" height="3.300" rx="1.500"/><rect x="20.500" y="72.900" width="6.800" height="3.300" rx="1.500"/><rect x="20.500" y="76.600" width="6.800" height="3.300" rx="1.500"/>
<path d="M27.500 65.800h-1.800a2.200 2.200 0 0 0-2.200 2.200v1M23.500 80.200v1a2.200 2.200 0 0 0 2.200 2.200h1.800"/>
<path d="M29.800 66.200h2.800l1 1.300h4.200v5.700h-8z"/><path d="M31.600 69.300h4.600M31.600 71h4.600"/>
<path d="M29.800 76.300h2.800l1 1.300h4.200v5.600h-8z"/><rect x="31.400" y="79.500" width="4.800" height="2.200" fill="#cfcfcf" stroke="none"/>
<!-- devices -->
<rect x="20.700" y="113.700" width="17" height="4.300" rx="1.300"/><rect x="20.700" y="120" width="17" height="4.300" rx="1.300"/><rect x="20.700" y="126.300" width="17" height="4.300" rx="1.300"/>
<g stroke="#c4c4c4" stroke-width="1.700" stroke-linecap="butt"><path d="M22.600 115.850h6M22.600 122.150h6M22.600 128.450h6"/><path d="M30 115.850h6M30 122.150h6M30 128.450h6" stroke-dasharray="1.200 1.200"/></g>
<!-- design -->
<path d="M30 173.300H20.600V161.300H37.600V166.600M25.500 173.400v2.200M23 175.700h6.500"/>
<rect x="30.400" y="167" width="7.500" height="11.500" rx="1.400"/><path d="M33 168.600h2.300M33.500 177h1.300" stroke-width=".8"/>
<path d="M25 164h8v2M24.800 167v3.600h5" stroke-width=".9"/><circle cx="24.800" cy="164" r=".9" fill="#e4e4e4" stroke="none"/><circle cx="24.800" cy="167" r=".9" fill="#e4e4e4" stroke="none"/>
<!-- resources -->
<path d="M24.200 210.400H20.600V222.600H37.800V210.400H34.500M20.600 220.200H37.800M27.200 222.700v2M31.200 222.700v2M24.300 225h9.800"/>
<rect x="25" y="208.500" width="5.600" height="7.300" fill="#d8d8d8" stroke="#e4e4e4" stroke-width=".8"/><path d="M26 210.700h3.600M26 212.700h3.600" stroke="#444" stroke-width=".8"/>
<path d="M31.500 209.500l2.300.8-1.800 4.500M29 207.600c1-1 3.500-1 4.300 0" stroke-width=".9"/><path d="M26.500 216.500h3" stroke-width=".9"/>
<!-- external -->
<path d="M25 261.300h2.800l.9 1.100h4.700v5.800H25z"/><rect x="26.800" y="264.600" width="4.800" height="2.100" fill="#cfcfcf" stroke="none"/>
<path d="M22.300 257.300v2.200h4.600v1.600M36 257.300v2.200h-4.600v2M21.400 265v2.200h3.400M37 265v2.200h-3.400M22.800 272.800h4.700v-4.400M35.600 272.800h-4.700v-4.400" stroke-width=".9"/>
<g fill="#e4e4e4" stroke="none"><circle cx="22.300" cy="257" r="1"/><circle cx="36" cy="257" r="1"/><circle cx="21.400" cy="264.700" r="1"/><circle cx="37" cy="264.700" r="1"/><circle cx="22.300" cy="272.800" r="1"/><circle cx="36" cy="272.800" r="1"/></g>
<!-- platform -->
<path d="M29.300 303.500L37.600 308 29.300 312.500 21 308Z"/><path d="M23.400 311L21 312.300 29.300 316.800 37.600 312.300 35.200 311"/><path d="M23.400 315.200L21 316.500 29.300 321 37.600 316.500 35.200 315.200"/>
<!-- favorites -->
<path d="M29.00,351.20 L31.06,356.17 L36.42,356.59 L32.33,360.08 L33.58,365.31 L29.00,362.50 L24.42,365.31 L25.67,360.08 L21.58,356.59 L26.94,356.17Z" stroke-width="1.200"/>
<!-- user -->
<circle cx="28.700" cy="496.800" r="12.700" fill="#424242" stroke="none"/>
<circle cx="29" cy="495.300" r="3.200" stroke="#d0d0d0" stroke-width="1.100"/><path d="M24.700 501v-.5a2 2 0 0 1 2-1.800h4.600a2 2 0 0 1 2 1.800v.5" stroke="#d0d0d0" stroke-width="1.100"/>
</svg>
<span class="t" id="t76" style="left:-1.00px;top:40.94px;font-size:8.2px;transform:scaleX(0.9962);color:#ececec;z-index:3">Juniper Apstra™</span>
<span class="t" id="t77" style="left:10.30px;top:88.14px;font-size:8.2px;transform:scaleX(0.9309);color:#fff;font-weight:bold;z-index:3">Blueprints</span>
<span class="t" id="t78" style="left:15.00px;top:135.44px;font-size:8.2px;transform:scaleX(0.9009);color:#fff;font-weight:bold;z-index:3">Devices</span>
<span class="t" id="t79" style="left:17.00px;top:182.94px;font-size:8.2px;transform:scaleX(0.8970);color:#fff;font-weight:bold;z-index:3">Design</span>
<span class="t" id="t80" style="left:11.00px;top:230.94px;font-size:8.2px;transform:scaleX(0.8812);color:#fff;font-weight:bold;z-index:3">Resources</span>
<span class="t" id="t81" style="left:-1.00px;top:278.74px;font-size:8.2px;transform:scaleX(0.8919);color:#fff;font-weight:bold;z-index:3">External Systems</span>
<span class="t" id="t82" style="left:13.00px;top:325.94px;font-size:8.2px;transform:scaleX(0.9784);color:#fff;font-weight:bold;z-index:3">Platform</span>
<span class="t" id="t83" style="left:12.00px;top:372.34px;font-size:8.2px;transform:scaleX(0.9421);color:#fff;font-weight:bold;z-index:3">Favorites</span>
<span class="t" id="t84" style="left:913.00px;top:482.84px;font-size:11.0px;transform:scaleX(0.7714);color:rgba(255,255,255,.42);z-index:61;font-weight:normal">JUNIPEr</span>
<span class="t" id="t85" style="left:929.50px;top:492.43px;font-size:2.6px;transform:scaleX(0.9000);color:rgba(255,255,255,.42);z-index:61;font-weight:normal">NETWORKS</span>
<div class="abs" style="left:0;top:0;width:954px;height:1px;background:#f4f4f4;z-index:70"></div><div class="abs" style="left:70px;top:1px;width:884px;height:1px;background:#cfcfcf;z-index:70"></div>
<div id="fade"></div>

</div>
</body>
</html>
